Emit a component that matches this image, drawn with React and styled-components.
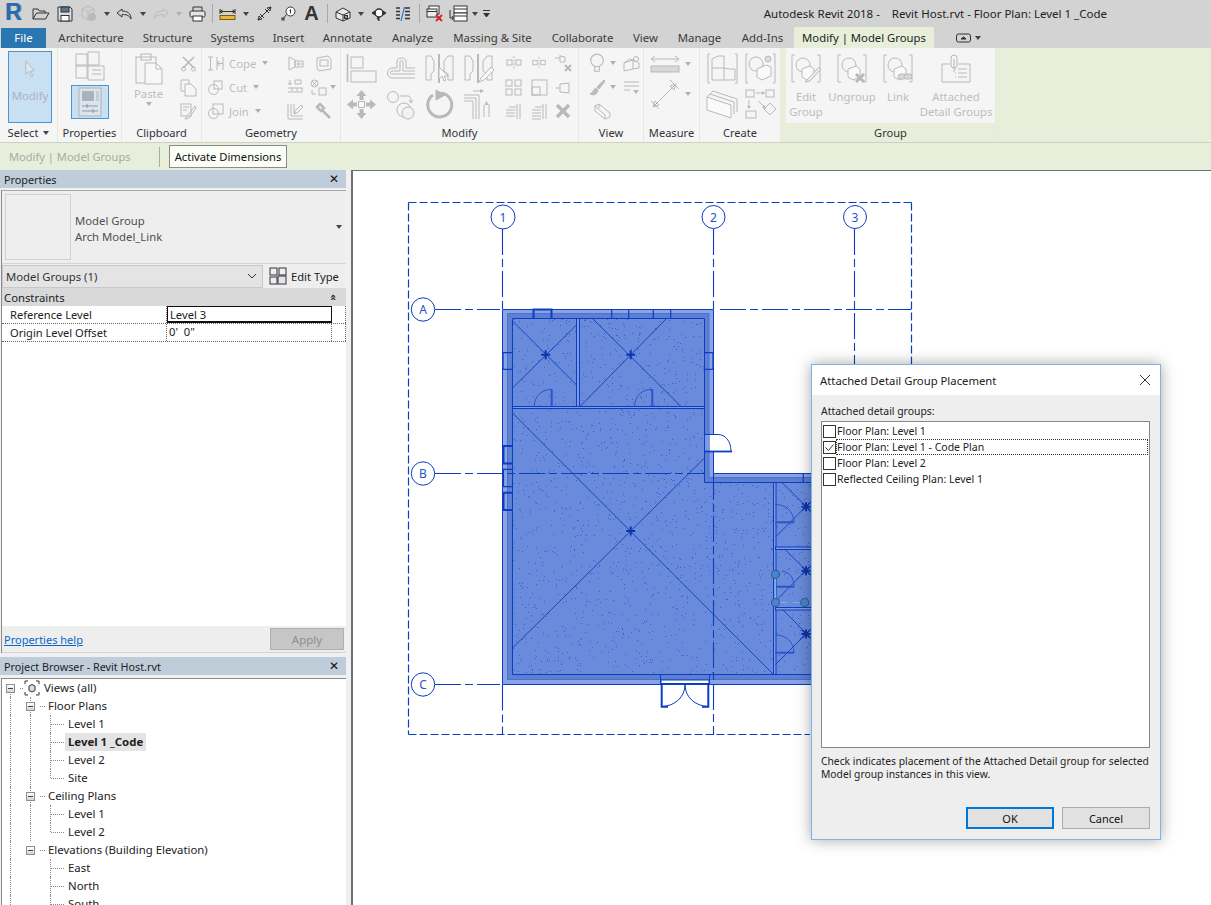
import React, { useMemo } from 'react';
import styled, { createGlobalStyle } from 'styled-components';

const FONT = `"Noto Sans", "Open Sans", sans-serif`;

const GlobalStyle = createGlobalStyle`
    html, body {
        margin:0;
        padding:0;
        background:#f0f0f0;
    }
    * {
        box-sizing:border-box;
    }
`;

function App() {
    return (
        <Page>
            <GlobalStyle />
            <TitleBar>
                <Logo>R</Logo>
                {qatItems().map((item, i) => (
                    <QatSlot key={i} $w={item.w}>{item.el}</QatSlot>
                ))}
                <WindowTitle>Autodesk Revit 2018 - &nbsp;&nbsp; Revit Host.rvt - Floor Plan: Level 1 _Code</WindowTitle>
            </TitleBar>
            <TabBar>
                <FileTab>File</FileTab>
                {tabs.map((t) => (
                    <Tab key={t[0]} $w={t[1]}>{t[0]}</Tab>
                ))}
                <ContextTab>Modify | Model Groups</ContextTab>
                <TabExtra>
                    <Glyph $s={18} viewBox="0 0 18 12" $tone="dark"><rect x="1.5" y="2" width="14" height="8" rx="2" /><path d="M6 7l2.5-2L11 7z" fill="#333" /></Glyph>
                    <Caret $dark />
                </TabExtra>
            </TabBar>
            <Ribbon />
            <OptionsBar>
                <ContextName>Modify | Model Groups</ContextName>
                <OptionsSep />
                <OptionsButton>Activate Dimensions</OptionsButton>
            </OptionsBar>
            <Workspace>
                <LeftColumn>
                    <PropertiesPanel />
                    <BrowserPanel />
                </LeftColumn>
                <Canvas>
                    <Drawing />
                    <Dialog />
                </Canvas>
            </Workspace>
        </Page>
    );
}

// ---- quick access toolbar

const Sep = () => <QatSep />;

const qatItems = () => [
    { w: 27, el: null },
    { w: 27, el: <Glyph $s={18} viewBox="0 0 18 16" $tone="dark"><path d="M1 13V3h5l1.500 2H13v2" /><path d="M1 13l3.500-6H17l-3.500 6z" /></Glyph> },
    { w: 22, el: <Glyph $s={16} viewBox="0 0 16 16" $tone="dark"><path d="M1 1h12l2 2v12H1z" fill="#d8dde2" /><rect x="4" y="1" width="8" height="5" fill="#5b7690" /><rect x="4" y="9.500" width="8" height="5.500" fill="#fff" /></Glyph> },
    { w: 25, el: <Glyph $s={17} viewBox="0 0 17 17"><path d="M8 1l6 3v7l-6 4-6-4V4z" /><path d="M2 4l6 3 6-3M8 7v8" /><circle cx="12" cy="12" r="3.500" fill="#bbb" /></Glyph> },
    { w: 11, el: <Caret $dark /> },
    { w: 25, el: <Glyph $s={17} viewBox="0 0 17 14" $tone="dark"><path d="M6 2L1 6l5 4V7.500c4 0 7 .5 9 4.500 0-6-4-8-9-8z" /></Glyph> },
    { w: 11, el: <Caret $dark /> },
    { w: 25, el: <Glyph $s={17} viewBox="0 0 17 14"><path d="M11 2l5 4-5 4V7.500c-4 0-7 .5-9 4.500 0-6 4-8 9-8z" /></Glyph> },
    { w: 11, el: <Caret /> },
    { w: 26, el: <Glyph $s={17} viewBox="0 0 17 16" $tone="dark"><path d="M4 5V1h9v4" /><rect x="1" y="5" width="15" height="6" rx="1.500" fill="#e4e4e4" /><rect x="4" y="10" width="9" height="5" fill="#fff" /></Glyph> },
    { w: 5, el: <Sep /> },
    { w: 25, el: <Glyph $s={17} viewBox="0 0 17 14" $tone="dark"><path d="M1 2v5M16 2v5M1 4.500h15M3.500 3L1 4.500 3.500 6M13.500 3L16 4.500 13.500 6" /><rect x="1" y="8.500" width="15" height="4" fill="#e8b83a" stroke="#7a5a10" /></Glyph> },
    { w: 11, el: <Caret $dark /> },
    { w: 26, el: <Glyph $s={17} viewBox="0 0 17 17" $tone="dark"><path d="M2 15L15 2M4 9l4 4M9 4l4 4M2 15l1-4 3 3zM15 2l-1 4-3-3z" /></Glyph> },
    { w: 22, el: <Glyph $s={15} viewBox="0 0 15 15" $tone="dark"><circle cx="9.500" cy="5.500" r="4.500" fill="#fff" /><path d="M9.500 3.500v4M8.500 4.500l1-1M5.500 8.500L2 13" /><rect x="1" y="12" width="2" height="2" /></Glyph> },
    { w: 25, el: <LetterTool>A</LetterTool> },
    { w: 6, el: <Sep /> },
    { w: 25, el: <Glyph $s={16} viewBox="0 0 16 16" $tone="dark"><path d="M1 6l7-4 7 4v6l-7 3-7-3z" fill="#e9e9e9" /><path d="M1 6l7 3 7-3M8 9v6" /><rect x="9.500" y="9.500" width="3" height="3" fill="#999" /></Glyph> },
    { w: 11, el: <Caret $dark /> },
    { w: 25, el: <Glyph $s={14} viewBox="0 0 14 14" $tone="dark"><circle cx="7" cy="6" r="4" fill="#fff" strokeWidth="1.500" /><path d="M0 6h3M11 6h3" /><path d="M7 10v4l-2-3z" fill="#333" /><path d="M3 4L0 6l3 2zM11 4l3 2-3 2z" fill="#333" /></Glyph> },
    { w: 24, el: <Glyph $s={16} viewBox="0 0 16 16" $tone="dark"><path d="M1 2h4M1 5.500h4M1 9h4M1 12.500h4M10 2h5M10 5.500h5M10 9h5M10 12.500h5" strokeWidth="1.500" /><path d="M9.500 1L6 15" stroke="#2a7fd4" strokeWidth="1.200" /></Glyph> },
    { w: 8, el: <Sep /> },
    { w: 23, el: <Glyph $s={17} viewBox="0 0 17 17" $tone="dark"><rect x="3" y="1" width="10" height="8" fill="#fff" /><rect x="1" y="4" width="10" height="8" fill="#eee" /><path d="M1 6.500h10" /><path d="M10 10l6 6M16 10l-6 6" stroke="#d42020" strokeWidth="1.800" /></Glyph> },
    { w: 24, el: <Glyph $s={19} viewBox="0 0 19 17" $tone="dark"><rect x="5" y="1" width="13" height="7" fill="#fff" /><rect x="5" y="8" width="13" height="8" fill="#fff" /><path d="M5 4h13M5 11h13M1 5v8h3M3 11l1.500 2L3 15" /></Glyph> },
    { w: 10, el: <Caret $dark /> },
    { w: 12, el: <CustomizeMark />, },
];

// ---- tabs

const tabs = [
    ['Architecture', 86], ['Structure', 67], ['Systems', 63], ['Insert', 49], ['Annotate', 69], ['Analyze', 61],
    ['Massing & Site', 99], ['Collaborate', 81], ['View', 45], ['Manage', 63], ['Add-Ins', 63],
];

// ---- ribbon

const Arrow = ({ d }) => <path d={d} fill="#b9b9b9" stroke="none" />;

const Ribbon = () => (
    <RibbonBar>
        <Panel $w={58}>
            <PanelBody>
                <ModifyButton>
                    <Glyph $s={15} viewBox="0 0 16 20"><path d="M3 1v14l3-3 2.500 6 2-1-2.500-5.500H12z" fill="#dce7f1" /></Glyph>
                    <ModifyText>Modify</ModifyText>
                </ModifyButton>
            </PanelBody>
            <PanelLabel>Select <Caret $dark $left={5} /></PanelLabel>
        </Panel>
        <Panel $w={64}>
            <PropsBody>
                <Glyph $s={31} viewBox="0 0 31 31"><rect x="2" y="3" width="11" height="11" /><rect x="14" y="1" width="11" height="13" /><rect x="2" y="15" width="11" height="12" /><rect x="14" y="15" width="16" height="14" fill="#f4f4f4" /><path d="M18 19h9M18 23h9" /></Glyph>
                <ActiveProps>
                    <Glyph $s={24} viewBox="0 0 24 30"><rect x="1" y="1" width="22" height="28" fill="#dce4ec" stroke="#a9b3bd" /><rect x="4" y="4" width="12" height="10" fill="#a9b3bd" stroke="none" /><rect x="18" y="4" width="3" height="10" fill="#c5cdd5" stroke="none" /><path d="M4 19h16M4 24h16M9 17v4M15 22v4" stroke="#8d97a1" /></Glyph>
                </ActiveProps>
            </PropsBody>
            <PanelLabel>Properties</PanelLabel>
        </Panel>
        <Panel $w={80}>
            <ClipboardBody>
                <PasteCol>
                    <Glyph $s={30} viewBox="0 0 30 32"><rect x="2" y="4" width="20" height="26" /><rect x="7" y="1" width="10" height="6" /><path d="M11 10h11l6 6v15H11z" fill="#f7f7f7" /><path d="M22 10v6h6" /></Glyph>
                    <ToolText>Paste</ToolText>
                    <Caret />
                </PasteCol>
                <ToolGrid $cols="26px">
                    <Cell><Glyph $s={17} viewBox="0 0 17 17"><path d="M3 2l11 11M14 2L3 13" strokeWidth="1.600" /><circle cx="3.500" cy="14" r="2" /><circle cx="13.500" cy="14" r="2" /></Glyph></Cell>
                    <Cell><Glyph $s={17} viewBox="0 0 17 17"><path d="M1 1h8v4M5 5h6l5 5v7H5zM1 1v11h4" /></Glyph></Cell>
                    <Cell><Glyph $s={17} viewBox="0 0 17 17"><rect x="1" y="1" width="10" height="12" /><path d="M3 4h6M3 7h4M15 3L7 13l-2 3 4-1 7-10z" /></Glyph></Cell>
                </ToolGrid>
            </ClipboardBody>
            <PanelLabel>Clipboard</PanelLabel>
        </Panel>
        <Panel $w={139}>
            <GeometryBody>
                <ToolGrid $cols="76px 25px 30px">
                    <Cell $start>
                        <Glyph $s={17} viewBox="0 0 17 17"><path d="M1 2h5M1 15h5M3.500 2v13M10 2v13M16 2v13M10 8.500h6M13 6l-3 2.500L13 11" /></Glyph>
                        <ToolText $gap={5}>Cope</ToolText><Caret $left={6} />
                    </Cell>
                    <Cell><Glyph $s={17} viewBox="0 0 17 17"><path d="M2 2v13l6-3V5zM8 6h8v6H8z" /><path d="M15 9H10M12 7l-2 2 2 2" /></Glyph></Cell>
                    <Cell><Glyph $s={17} viewBox="0 0 17 17"><path d="M2 3l11-2 3 3v10l-12 2-2-3z" /><rect x="5" y="5" width="8" height="6" /></Glyph></Cell>
                    <Cell $start>
                        <Glyph $s={17} viewBox="0 0 17 17"><circle cx="6.500" cy="10.500" r="5" /><rect x="7" y="2" width="8" height="8" /></Glyph>
                        <ToolText $gap={5}>Cut</ToolText><Caret $left={6} />
                    </Cell>
                    <Cell><Glyph $s={17} viewBox="0 0 17 17"><path d="M3 1v5M1 4l2 2 2-2M8 1h6v4H8zM1 9h15M5 9v3M10 9v3M15 9v3M1 13h15" /></Glyph></Cell>
                    <Cell>
                        <Glyph $s={17} viewBox="0 0 17 17"><circle cx="4.500" cy="4.500" r="3.500" /><path d="M2 2l5 5M7 2L2 7" /><rect x="9" y="9" width="7" height="7" /><path d="M2 11v4h4" /></Glyph>
                        <Caret $left={3} />
                    </Cell>
                    <Cell $start>
                        <Glyph $s={17} viewBox="0 0 17 17"><rect x="6" y="1" width="10" height="10" /><circle cx="6.500" cy="10.500" r="5" /></Glyph>
                        <ToolText $gap={5}>Join</ToolText><Caret $left={6} />
                    </Cell>
                    <Cell><Glyph $s={17} viewBox="0 0 17 17"><path d="M1 1v15h15M4 1v12h12M7 1v9h2M14 2L8 8l-1 3 3-1 6-6z" /></Glyph></Cell>
                    <Cell><Glyph $s={17} viewBox="0 0 17 17"><path d="M2 4l3-3 4 4-3 3zM7 7l8 8" strokeWidth="2.500" /></Glyph></Cell>
                </ToolGrid>
            </GeometryBody>
            <PanelLabel>Geometry</PanelLabel>
        </Panel>
        <Panel $w={238}>
            <ModifyBody>
                <LargeGrid>
                    <Glyph $s={31} viewBox="0 0 31 31"><path d="M1.500 1v28" strokeWidth="1.600" /><rect x="5" y="4" width="12" height="11" /><rect x="5" y="18" width="25" height="11" /></Glyph>
                    <Glyph $s={31} viewBox="0 0 31 31"><path d="M30 15h-9V8c0-4-9-4-9 0v7H7c-6 0-6 10 0 10h23M30 21H7c-2 0-2-3 0-3h8V9c0-2 3-2 3 0v9h12" /></Glyph>
                    <Glyph $s={31} viewBox="0 0 31 31"><path d="M2 3h5l3 5v10l-3 3v6H2z" /><path d="M15 1v29" strokeWidth="2" /><path d="M29 3h-5l-4 5v10l4 3v6h5z" fill="#f4f4f4" /><path d="M15 14v12l3-3 2 5 2-1-2-4h4z" fill="#fafafa" /></Glyph>
                    <Glyph $s={31} viewBox="0 0 31 31"><path d="M2 3h5l3 5v10l-3 3v6H2z" /><path d="M15 1v29" strokeWidth="2" /><path d="M29 3h-5l-4 5v10l4 3v6h5z" fill="#f4f4f4" /><path d="M28 14L18 25l-2 4 5-2 10-10z" fill="#fafafa" /></Glyph>
                    <Glyph $s={31} viewBox="0 0 31 31" $solid><Arrow d="M15.500 1l5 6h-3v4h-4V7h-3zM15.500 30l5-6h-3v-4h-4v4h-3zM1 15.500l6-5v3h4v4H7v3zM30 15.500l-6-5v3h-4v4h4v3z" /><rect x="12.500" y="12.500" width="6" height="6" fill="#f8f8f8" /></Glyph>
                    <Glyph $s={31} viewBox="0 0 31 31"><circle cx="8" cy="8" r="5.500" /><path d="M15 7h8c3 0 3 3 3 6M24 11l2 3 2-3" /><circle cx="19" cy="21" r="7" /><circle cx="23" cy="24" r="6" fill="#f2f2f2" /></Glyph>
                    <Glyph $s={31} viewBox="0 0 31 31"><path d="M9 6a12 12 0 1 0 8-2" fill="none" strokeWidth="3" /><path d="M12 1l9 5-9 5z" fill="#b9b9b9" /></Glyph>
                    <Glyph $s={31} viewBox="0 0 31 31"><path d="M1 6h15v24M1 9h12v21M1 12h9v18M10 2h10l-2-1M21 16v12M26 15v13" /><Arrow d="M21 2l-4-2v4zM23.500 12l-2 4h4z" /></Glyph>
                </LargeGrid>
                <ToolGrid $cols="25px 26px 22px">
                    <Cell><Glyph $s={18} viewBox="0 0 18 18"><path d="M9 2v14" strokeDasharray="2 1.500" /><rect x="2" y="6" width="5" height="5" /><rect x="11" y="6" width="5" height="5" /></Glyph></Cell>
                    <Cell><Glyph $s={16} viewBox="0 0 18 18"><path d="M9 2v14" strokeDasharray="2 1.500" /><rect x="2" y="6" width="5" height="5" /><rect x="11" y="6" width="5" height="5" /></Glyph></Cell>
                    <Cell><Glyph $s={18} viewBox="0 0 18 18"><path d="M1 4h5M6 1v7M6 2l5 1v5H6" /><path d="M11 11l6 6M17 11l-6 6" strokeWidth="2" /></Glyph></Cell>
                    <Cell><Glyph $s={17} viewBox="0 0 17 17"><rect x="1" y="1" width="6" height="6" /><rect x="10" y="1" width="6" height="6" /><rect x="1" y="10" width="6" height="6" /><rect x="10" y="10" width="6" height="6" /></Glyph></Cell>
                    <Cell><Glyph $s={17} viewBox="0 0 17 17"><rect x="1" y="1" width="15" height="15" /><rect x="1" y="8" width="8" height="8" /></Glyph></Cell>
                    <Cell><Glyph $s={17} viewBox="0 0 17 17"><path d="M1 9h4M5 5v8M5 5l9-1v10l-9-1" /></Glyph></Cell>
                    <Cell><Glyph $s={17} viewBox="0 0 17 17"><path d="M15 1v15M12 1v15M1 7h9M1 10h9M1 13h9M4 4h7" /></Glyph></Cell>
                    <Cell><Glyph $s={17} viewBox="0 0 17 17"><path d="M15 1v15M12 1v15M1 7h9M1 10h9M1 13h9M4 4h7M1 16h9" /></Glyph></Cell>
                    <Cell><Glyph $s={16} viewBox="0 0 16 16"><path d="M2 2l12 12M14 2L2 14" strokeWidth="3.500" /></Glyph></Cell>
                </ToolGrid>
            </ModifyBody>
            <PanelLabel>Modify</PanelLabel>
        </Panel>
        <Panel $w={65}>
            <GeometryBody>
                <ToolGrid $cols="37px 20px">
                    <Cell>
                        <Glyph $s={16} viewBox="0 0 14 18"><circle cx="7" cy="6.500" r="5.500" /><path d="M5 12v4h4v-4" /></Glyph>
                        <Caret $left={5} />
                    </Cell>
                    <Cell><Glyph $s={17} viewBox="0 0 17 17"><path d="M1 8l9-3v9l-9 2zM10 5l6 3v5l-6 1M1 8l6-4 3 1" /><circle cx="13" cy="4" r="2.500" /></Glyph></Cell>
                    <Cell>
                        <Glyph $s={17} viewBox="0 0 17 17"><path d="M15 1L8 8l2 2 6-8zM7 9c-3 1-2 4-6 6 4 2 8 0 8-4z" fill="#bdbdbd" /></Glyph>
                        <Caret $left={4} />
                    </Cell>
                    <Cell><Glyph $s={17} viewBox="0 0 17 17"><path d="M1 3h15M1 7h15M1 11h6" /><Arrow d="M13 15l-3-4h6z" /></Glyph></Cell>
                    <Cell><Glyph $s={17} viewBox="0 0 17 17"><path d="M1 3l10 9v4L1 8zM1 3l4-2 11 9v4l-5 2M5 1v4" /></Glyph></Cell>
                </ToolGrid>
            </GeometryBody>
            <PanelLabel>View</PanelLabel>
        </Panel>
        <Panel $w={56}>
            <MeasureBody>
                <MeasureRow>
                    <Glyph $s={30} viewBox="0 0 30 20"><path d="M1 5h28M1 5l4-3M1 5l4 3M29 5l-4-3M29 5l-4 3" /><rect x="1" y="12" width="28" height="6" fill="#d8d8d8" /></Glyph>
                    <Caret $left={5} />
                </MeasureRow>
                <MeasureRow>
                    <Glyph $s={30} viewBox="0 0 30 30"><path d="M3 28L26 5M1 22l8 8M20 1l9 9M3 28l2-6 4 4zM26 5l-6 2 4 4z" /></Glyph>
                    <Caret $left={5} />
                </MeasureRow>
            </MeasureBody>
            <PanelLabel>Measure</PanelLabel>
        </Panel>
        <Panel $w={81}>
            <CreateBody>
                <Glyph $s={31} viewBox="0 0 31 31"><path d="M3 1H1v29h2M28 1h2v29h-2M5 15V6l6-3h6v12M5 15h12v12H5zM17 27h11V16h-6l-5-1" /></Glyph>
                <Glyph $s={31} viewBox="0 0 31 31"><path d="M3 1H1v29h2M28 1h2v29h-2" /><circle cx="11" cy="11" r="7" /><path d="M12 16l9-4 5 2v9l-9 4-5-3z" fill="#fafafa" /><circle cx="23" cy="6" r="3" fill="#ddd" /></Glyph>
                <Glyph $s={33} viewBox="0 0 33 32"><path d="M1 9l24 8v13L1 22z" fill="#fafafa" /><path d="M4 6l24 8v12M7 3l24 8v13M1 9l3-3M4 6l3-3" /></Glyph>
                <Glyph $s={31} viewBox="0 0 31 31"><rect x="1" y="1" width="8" height="7" /><rect x="21" y="1" width="8" height="7" /><path d="M11 4h8M4 11v7M13 12l7 6" /><rect x="1" y="22" width="10" height="7" /><path d="M25 14l6 6-6 6-6-6z" /><Arrow d="M20 4l-3-2v4zM4 20l-2-3h4zM21 20l-4-1 2-3z" /></Glyph>
            </CreateBody>
            <PanelLabel>Create</PanelLabel>
        </Panel>
        <GroupPanel>
            <GroupBody>
                <GroupTool $w={40}>
                    <Glyph $s={30} viewBox="0 0 30 30"><path d="M4 1H1v27h3M26 1h3v27h-3" /><circle cx="12" cy="11" r="7" /><path d="M11 15l8-3 4 3v8l-7 3-5-3z" fill="#fafafa" /><path d="M28 13L17 25l-3 3 5-1 11-12z" fill="#ececec" /></Glyph>
                    <ToolText>Edit<br />Group</ToolText>
                </GroupTool>
                <GroupTool $w={52}>
                    <Glyph $s={30} viewBox="0 0 30 30"><path d="M4 1H1v27h3M26 1h3v27h-3" /><circle cx="12" cy="11" r="7" /><path d="M11 15l8-3 4 3v8l-7 3-5-3z" fill="#fafafa" /><path d="M19 20l8 8M27 20l-8 8" strokeWidth="3" /></Glyph>
                    <ToolText>Ungroup</ToolText>
                </GroupTool>
                <GroupTool $w={40}>
                    <Glyph $s={30} viewBox="0 0 30 30"><path d="M4 1H1v27h3M26 1h3v27h-3" /><circle cx="12" cy="11" r="7" /><path d="M11 15l8-3 4 3v8l-7 3-5-3z" fill="#fafafa" /><rect x="15" y="20" width="8" height="5" rx="2.500" fill="#d8d8d8" /><rect x="21" y="20" width="8" height="5" rx="2.500" fill="#d8d8d8" /></Glyph>
                    <ToolText>Link</ToolText>
                </GroupTool>
                <GroupTool $w={76}>
                    <Glyph $s={30} viewBox="0 0 30 30"><path d="M1 10h8M17 10h12v18H1V10" /><rect x="10" y="1" width="6" height="13" rx="3" /><path d="M13 5v13M17 15h9M17 19h9M17 23h9M14 15h1M14 19h1M14 23h1" /></Glyph>
                    <ToolText>Attached<br />Detail Groups</ToolText>
                </GroupTool>
            </GroupBody>
            <GroupLabel>Group</GroupLabel>
        </GroupPanel>
    </RibbonBar>
);

// ---- properties

const PropertiesPanel = () => (
    <PropsWrap>
        <PanelHeader>Properties<CloseMark>✕</CloseMark></PanelHeader>
        <PropsContent>
            <TypeBox>
                <TypePreview />
                <TypeName>Model Group<br />Arch Model_Link</TypeName>
                <Caret $dark />
            </TypeBox>
            <FilterRow>
                <FilterSelect>
                    Model Groups (1)
                    <Glyph $s={10} viewBox="0 0 10 6" $tone="dark"><path d="M1 1l4 4 4-4" /></Glyph>
                </FilterSelect>
                <EditType>
                    <Glyph $s={18} viewBox="0 0 18 18" $tone="dark"><rect x="1" y="1" width="7" height="7" /><rect x="10" y="1" width="7" height="7" /><rect x="1" y="10" width="7" height="7" /><rect x="9" y="9" width="8" height="8" fill="#dfe6ee" /></Glyph>
                    Edit Type
                </EditType>
            </FilterRow>
            <SectionHead>Constraints<Collapse>«</Collapse></SectionHead>
            <PropRow>
                <PropName>Reference Level</PropName>
                <PropValue $active>Level 3</PropValue>
                <PropTail />
            </PropRow>
            <PropRow>
                <PropName>Origin Level Offset</PropName>
                <PropValue>0'  0"</PropValue>
                <PropTail />
            </PropRow>
            <PropsBlank />
            <PropsFooter>
                <HelpLink>Properties help</HelpLink>
                <ApplyButton>Apply</ApplyButton>
            </PropsFooter>
        </PropsContent>
    </PropsWrap>
);

// ---- project browser

const treeRows = [
    { label: 'Views (all)', depth: 0 },
    { label: 'Floor Plans', depth: 1 },
    { label: 'Level 1', depth: 2, line: true },
    { label: 'Level 1 _Code', depth: 2, line: true, current: true },
    { label: 'Level 2', depth: 2, line: true },
    { label: 'Site', depth: 2, line: true, last: true },
    { label: 'Ceiling Plans', depth: 1 },
    { label: 'Level 1', depth: 2, line: true },
    { label: 'Level 2', depth: 2, line: true, last: true },
    { label: 'Elevations (Building Elevation)', depth: 1, end: true },
    { label: 'East', depth: 2 },
    { label: 'North', depth: 2 },
    { label: 'South', depth: 2 },
];

const BrowserPanel = () => (
    <BrowserWrap>
        <PanelHeader>Project Browser - Revit Host.rvt<CloseMark>✕</CloseMark></PanelHeader>
        <TreeBox>
            {treeRows.map((row, i) => (
                <TreeRow key={i}>
                    {row.depth > 0 && <Guide />}
                    {row.depth === 2 && <Guide $hidden={!row.line} />}
                    {row.depth < 2 && <ToggleSlot $end={row.end} $root={row.depth === 0}><Toggle /></ToggleSlot>}
                    {row.depth === 1 && <Dash />}
                    {row.depth === 0 && <Dash $short />}
                    {row.depth === 2 && <Elbow $last={row.last} />}
                    {row.depth === 0 && (
                        <ViewsIcon>
                            <Glyph $s={16} viewBox="0 0 16 16" $tone="dark"><path d="M1 4V1h3M12 1h3v3M15 12v3h-3M4 15H1v-3" /><path d="M5 6l3-1.500L11 6v4.500L8 12l-3-1.500z" fill="#ddd" /></Glyph>
                        </ViewsIcon>
                    )}
                    <TreeLabel $current={row.current}>{row.label}</TreeLabel>
                </TreeRow>
            ))}
        </TreeBox>
    </BrowserWrap>
);

// ---- plan drawing, coordinates are the page's own

const BLUE = '#0b3fc0';

const Star = ({ x, y, wide }) => (
    <g stroke="#0a36a8" strokeWidth="2">
        <path d={`M${x - 4.500} ${y}h9M${x} ${y - 4.500}v9`} />
        {wide && <path strokeWidth="1.200" d={`M${x - 4} ${y - 4}l8 8M${x + 4} ${y - 4}l-8 8`} />}
    </g>
);

const Bubble = ({ x, y, r, label }) => (
    <g>
        <circle cx={x} cy={y} r={r} fill="#fff" stroke={BLUE} />
        <BubbleText x={x} y={y + 4.500} textAnchor="middle">{label}</BubbleText>
    </g>
);

const Door = ({ d, leaf }) => (
    <g>
        <path d={d} fill="none" stroke="#2a55c8" />
        <path d={leaf} fill="none" stroke="#2a55c8" strokeWidth="2" />
    </g>
);

const Handle = ({ x, y }) => <circle cx={x} cy={y} r="4" fill="#3f86dc" stroke="#4a5c7c" strokeWidth="1.200" />;

function inside(x, y) {
    if (x < 513 || x > 830 || y < 319 || y > 674) return false;
    if (y < 483 && x > 704) return false;
    return true;
}

const Drawing = () => {
    const speckle = useMemo(() => {
        // small fixed generator, the dots must land in the same place every time
        let seed = 48271;
        const next = () => {
            seed = (seed * 16807) % 2147483647;
            return seed / 2147483647;
        };
        let d = '';
        for (let i = 0; i < 2000; i++) {
            const x = Math.round(512 + next() * 320);
            const y = Math.round(318 + next() * 358);
            if (inside(x, y)) d += `M${x} ${y}h1v1h-1z`;
        }
        return d;
    }, []);

    return (
        <PlanSvg viewBox="352 171 859 734">
            <path d="M502.500 309.500H713.500V473.500H830V684.500H502.500Z" fill="#8aa2e6" />
            <path d="M507.500 313.500H709V477.500H830V679.500H507.500Z" fill="#5d7fd4" stroke="#4d70cc" />
            <path d="M512.500 318.500H704.500V482.500H830V674.500H512.500Z" fill="#6a8bdb" />
            <path d={speckle} fill="#3a60d0" />

            {/* interior walls */}
            <g fill="#7f9ae2" stroke={BLUE} strokeWidth="1">
                <rect x="576.500" y="318.500" width="3" height="88" />
                <rect x="512.500" y="406.500" width="192" height="2" />
                <rect x="773.500" y="482.500" width="2.500" height="192" />
                <rect x="775.500" y="547" width="55" height="2.500" />
                <rect x="775.500" y="607.500" width="55" height="2.500" />
            </g>
            <path d="M502.500 309.500H713.500V473.500H830M830 684.500H502.500V309.500M512.500 318.500H704.500V482.500H830M830 674.500H512.500V318.500" fill="none" stroke={BLUE} />

            {/* ceiling diagonals */}
            <g stroke={BLUE} strokeWidth="0.900" fill="none">
                <path d="M512.500 321L576.500 385M576.500 325L512.500 388" />
                <path d="M592.500 318.500L681 406.500M666.500 318.500L580 406.500" />
                <path d="M512.500 413L773 674M512.500 648L704.500 458" />
                <path d="M782 482.500L830 530M775.500 537L830 482.500" />
                <path d="M785 549.500L830 594M775.500 601L830 546.500" />
                <path d="M783 610L830 657M775.500 664.500L830 610" />
            </g>
            <Star x={545.700} y={354.700} />
            <Star x={630.700} y={354.700} />
            <Star x={630.700} y={531} />
            <Star x={806} y={506.700} wide />
            <Star x={806} y={570.700} wide />
            <Star x={806} y={634} wide />

            {/* windows */}
            <g fill="none" stroke={BLUE} strokeWidth="1.200">
                <path d="M533.500 318V309.500H551.500V318" strokeWidth="2" />
                <path d="M611.700 318V309.500H628.700V318M653.300 318V309.500H670.700V318" />
                <path d="M512 352.700H503V369.300H512M704.500 352.700H713V369.300H704.500" />
                <path d="M512 446H503.500V463.500H512" strokeWidth="2" />
                <path d="M512 469.300H503.500V486.700H512" />
                <path d="M512 492.700H503.500V510H512" strokeWidth="2" />
                <path d="M803.300 482V473.500H830" />
            </g>

            {/* doors */}
            <Door d="M534.300 406.500C534.300 396 542 389.300 551.700 389.300" leaf="M551.700 389.300V406.500" />
            <Door d="M634.700 406.500C634.700 396 642 389.300 652.300 389.300" leaf="M652.300 389.300V406.500" />
            <Door d="M775.500 504.500C786 504.500 794 512 794 522.300" leaf="M775.500 522.300H794" />
            <Door d="M782 571C789 572 794 577 794 586.700" leaf="M775.500 586.700H794" />
            <Door d="M775.500 635C786 635 794 642 794 652.700" leaf="M775.500 652.700H794" />
            <path d="M704.500 434.500h5v17h-5z" fill="#7f9ae2" stroke={BLUE} />
            <path d="M709.500 434.500h4.500v17h-4.500z" fill="#fff" stroke="none" />
            <path d="M704.500 434.500H718C725 434.500 731 441 731 451" fill="none" stroke={BLUE} />
            <path d="M704.500 451.500H732" fill="none" stroke={BLUE} strokeWidth="1.800" />
            <path d="M660.500 674V684.500M709.500 674V684.500" stroke={BLUE} />
            <rect x="661" y="680" width="48" height="3.500" fill="#fff" stroke={BLUE} />
            <path d="M661.700 684.500V706.700H668M708.300 684.500V706.700H702" fill="none" stroke={BLUE} strokeWidth="2" />
            <path d="M662 706.500C675 706 685 697 685 684.500C685 697 695 706 708 706.500" fill="none" stroke={BLUE} />

            {/* handles */}
            <path d="M775.500 578V598M780 602.500H787M793 602.500H800" stroke="#6fb7e8" />
            <Handle x={775.500} y={574.300} />
            <Handle x={775.500} y={602.500} />
            <Handle x={804.700} y={602.500} />

            {/* crop region and grids */}
            <path d="M408.500 202.500H911.500M408.500 202.500V734.500M408.500 734.500H810" fill="none" stroke={BLUE} strokeWidth="1.200" strokeDasharray="8 3" />
            <path d="M911.500 202.500V364" fill="none" stroke={BLUE} strokeWidth="1.200" strokeDasharray="8 3" />
            <g fill="none" stroke={BLUE} strokeDasharray="26 4 8 4" strokeWidth="1.100">
                <path d="M502.500 229V309M502.500 684.500V735" />
                <path d="M713.500 229V309M713.500 474V735" />
                <path d="M854.500 229V364" />
                <path d="M435 309.500H500M720 309.500H911" />
                <path d="M435 473.500H704" />
                <path d="M435 684.500H500" />
            </g>
            <Bubble x={503} y={217} r={12} label="1" />
            <Bubble x={713.500} y={217} r={11.500} label="2" />
            <Bubble x={855} y={217} r={11.500} label="3" />
            <Bubble x={423} y={309.500} r={11.700} label="A" />
            <Bubble x={423} y={473.500} r={11.700} label="B" />
            <Bubble x={423} y={684.500} r={11.700} label="C" />
        </PlanSvg>
    );
};

// ---- dialog

const detailGroups = [
    { label: 'Floor Plan: Level 1' },
    { label: 'Floor Plan: Level 1 - Code Plan', checked: true },
    { label: 'Floor Plan: Level 2' },
    { label: 'Reflected Ceiling Plan: Level 1' },
];

const Dialog = () => (
    <DialogWindow>
        <DialogTitle>
            Attached Detail Group Placement
            <Glyph $s={12} viewBox="0 0 12 12" $tone="dark"><path d="M1 1l10 10M11 1L1 11" /></Glyph>
        </DialogTitle>
        <DialogBody>
            <DialogLabel>Attached detail groups:</DialogLabel>
            <CheckList>
                {detailGroups.map((g) => (
                    <CheckRow key={g.label}>
                        <CheckBox>
                            {g.checked && <Glyph $s={11} viewBox="0 0 11 11" $tone="dark"><path d="M1.500 5.500l3 3 5-6" /></Glyph>}
                        </CheckBox>
                        <CheckText $focus={g.checked}>{g.label}</CheckText>
                    </CheckRow>
                ))}
            </CheckList>
            <DialogNote>
                Check indicates placement of the Attached Detail group for selected<br />
                Model group instances in this view.
            </DialogNote>
            <DialogButtons>
                <DialogButton $primary>OK</DialogButton>
                <DialogButton>Cancel</DialogButton>
            </DialogButtons>
        </DialogBody>
    </DialogWindow>
);

// ---- styles

const Page = styled.div`
    width:1211px;
    height:905px;
    overflow:hidden;
    display:flex;
    flex-direction:column;
    font-family:${FONT};
    font-size:11.5px;
    color:#222;
    background:#f0f0f0;
`;
const TitleBar = styled.div`
    position:relative;
    height:27px;
    flex:none;
    display:flex;
    align-items:center;
    background:#d3d3d3;
`;
const Logo = styled.span`
    position:absolute;
    left:5px;
    top:0;
    font-family:"Liberation Sans", sans-serif;
    font-weight:bold;
    font-size:23px;
    line-height:25px;
    color:#2b6ca8;
    text-shadow:1px 0 0 #5a9ac8;
`;
const QatSlot = styled.div`
    width:${(p) => p.$w}px;
    flex:none;
    display:flex;
    align-items:center;
    justify-content:center;
`;
const QatSep = styled.div`
    width:1px;
    height:19px;
    background:#a8a8a8;
`;
const LetterTool = styled.span`
    font-family:"Liberation Sans", sans-serif;
    font-weight:bold;
    font-size:20px;
    color:#333;
`;
const CustomizeMark = styled.div`
    width:7px;
    height:8px;
    border-top:1px solid #333;
    &::after {
        content:"";
        display:block;
        margin-top:2px;
        border-left:3.5px solid transparent;
        border-right:3.5px solid transparent;
        border-top:4px solid #333;
    }
`;
const WindowTitle = styled.div`
    margin-left:auto;
    padding-right:104px;
    font-size:11.5px;
    white-space:nowrap;
    color:#222;
`;
const TabBar = styled.div`
    height:21px;
    flex:none;
    display:flex;
    align-items:flex-end;
    background:#d3d3d3;
    padding-left:1px;
`;
const FileTab = styled.div`
    width:45px;
    height:20px;
    margin-right:2px;
    background:#2a76b0;
    color:#fff;
    text-align:center;
    line-height:19px;
    font-size:11.5px;
`;
const Tab = styled.div`
    width:${(p) => p.$w}px;
    flex:none;
    height:20px;
    text-align:center;
    line-height:20px;
    font-size:11.4px;
    color:#3a3a3a;
    white-space:nowrap;
`;
const ContextTab = styled.div`
    width:140px;
    flex:none;
    height:21px;
    background:#e7efda;
    text-align:center;
    line-height:21px;
    font-size:11.3px;
    white-space:nowrap;
`;
const TabExtra = styled.div`
    margin-left:21px;
    height:20px;
    display:flex;
    align-items:center;
    gap:2px;
`;
const RibbonBar = styled.div`
    height:95px;
    flex:none;
    display:flex;
    background:#e7efda;
    border-bottom:1px solid #ccd3c4;
`;
const Panel = styled.div`
    width:${(p) => p.$w}px;
    flex:none;
    display:flex;
    flex-direction:column;
    background:#f5f5f5;
    border-right:1px solid #e4edd7;
`;
const PanelBody = styled.div`
    height:75px;
    padding:3px 0 0 8px;
`;
const PanelLabel = styled.div`
    flex:1;
    display:flex;
    align-items:center;
    justify-content:center;
    font-size:11.1px;
    color:#333;
`;
const ModifyButton = styled.div`
    width:44px;
    height:72px;
    background:#c9dff2;
    border:1px solid #4d94d4;
    display:flex;
    flex-direction:column;
    align-items:center;
    padding-top:8px;
    gap:9px;
`;
const ModifyText = styled.span`
    color:#a9b4be;
    font-size:11.3px;
`;
const PropsBody = styled.div`
    height:75px;
    display:flex;
    flex-direction:column;
    align-items:center;
    padding-top:3px;
    gap:3px;
`;
const ActiveProps = styled.div`
    width:38px;
    height:34px;
    background:#c9dff2;
    border:1px solid #4d94d4;
    display:flex;
    align-items:center;
    justify-content:center;
`;
const ClipboardBody = styled.div`
    height:75px;
    display:flex;
    padding-top:3px;
`;
const PasteCol = styled.div`
    width:53px;
    display:flex;
    flex-direction:column;
    align-items:center;
    gap:1px;
    padding-top:2px;
`;
const ToolText = styled.span`
    color:#bdbdbd;
    font-size:11.3px;
    line-height:15px;
    text-align:center;
    margin-left:${(p) => p.$gap || 0}px;
`;
const ToolGrid = styled.div`
    display:grid;
    grid-template-columns:${(p) => p.$cols};
    grid-auto-rows:24px;
`;
const Cell = styled.div`
    display:flex;
    align-items:center;
    justify-content:${(p) => (p.$start ? 'flex-start' : 'center')};
`;
const GeometryBody = styled.div`
    height:75px;
    padding:3px 0 0 5px;
`;
const ModifyBody = styled.div`
    height:75px;
    display:flex;
    padding:3px 0 0 5px;
    gap:7px;
`;
const LargeGrid = styled.div`
    display:grid;
    grid-template-columns:repeat(4, 31px);
    column-gap:8px;
    row-gap:5px;
    align-content:start;
    align-items:center;
    justify-items:center;
    padding-top:2px;
`;
const MeasureBody = styled.div`
    height:75px;
    display:flex;
    flex-direction:column;
    align-items:flex-start;
    padding:6px 0 0 6px;
    gap:5px;
`;
const MeasureRow = styled.div`
    display:flex;
    align-items:center;
`;
const CreateBody = styled.div`
    height:75px;
    display:grid;
    grid-template-columns:38px 38px;
    justify-items:center;
    align-items:center;
    align-content:start;
    padding:5px 0 0 3px;
    row-gap:4px;
`;
const GroupPanel = styled.div`
    width:210px;
    flex:none;
    margin-left:5px;
    display:flex;
    flex-direction:column;
    border-right:1px solid #e4edd7;
`;
const GroupBody = styled.div`
    height:75px;
    background:#f5f5f5;
    display:flex;
    padding:6px 0 0 0;
`;
const GroupTool = styled.div`
    width:${(p) => p.$w}px;
    flex:none;
    display:flex;
    flex-direction:column;
    align-items:center;
    gap:5px;
    white-space:nowrap;
`;
const GroupLabel = styled.div`
    flex:1;
    display:flex;
    align-items:center;
    justify-content:center;
    font-size:11.1px;
    color:#333;
`;
const OptionsBar = styled.div`
    height:27px;
    flex:none;
    display:flex;
    align-items:center;
    background:#e7efda;
    padding-left:9px;
`;
const ContextName = styled.span`
    width:150px;
    color:#a8aca3;
    font-size:11.1px;
`;
const OptionsSep = styled.div`
    width:1px;
    height:20px;
    background:#a8ada1;
`;
const OptionsButton = styled.div`
    margin-left:9px;
    width:118px;
    height:23px;
    display:flex;
    align-items:center;
    justify-content:center;
    background:#fbfdf7;
    border:1px solid #8b8b8b;
    font-size:11.2px;
    color:#111;
    white-space:nowrap;
`;
const Workspace = styled.div`
    flex:1;
    min-height:0;
    display:flex;
`;
const LeftColumn = styled.div`
    width:346px;
    flex:none;
    display:flex;
    flex-direction:column;
`;
const PropsWrap = styled.div`
    height:483px;
    flex:none;
    display:flex;
    flex-direction:column;
`;
const PanelHeader = styled.div`
    height:18px;
    flex:none;
    display:flex;
    align-items:center;
    justify-content:space-between;
    padding:0 7px 0 4px;
    background:#bfcddb;
    font-size:10.8px;
    color:#222;
`;
const CloseMark = styled.span`
    font-family:"DejaVu Sans", sans-serif;
    font-weight:bold;
    font-size:12px;
    color:#111;
`;
const PropsContent = styled.div`
    flex:1;
    display:flex;
    flex-direction:column;
    margin-top:2px;
    margin-left:1px;
    border-left:1px solid #8a8a8a;
    border-top:1px solid #a8a8a8;
    background:#eee;
`;
const TypeBox = styled.div`
    height:73px;
    flex:none;
    display:flex;
    align-items:center;
    padding:0 4px 0 3px;
    border-bottom:1px solid #d4d4d4;
`;
const TypePreview = styled.div`
    width:66px;
    height:66px;
    border:1px solid #d0d0d0;
    flex:none;
`;
const TypeName = styled.div`
    flex:1;
    padding:3px 0 0 4px;
    line-height:16px;
    color:#50504f;
    font-size:11.3px;
`;
const FilterRow = styled.div`
    height:24px;
    flex:none;
    display:flex;
    align-items:center;
`;
const FilterSelect = styled.div`
    width:261px;
    height:23px;
    flex:none;
    display:flex;
    align-items:center;
    justify-content:space-between;
    padding:0 5px 0 3px;
    background:#e4e4e4;
    border:1px solid #c8c8c8;
    color:#333;
    font-size:11.3px;
`;
const EditType = styled.div`
    display:flex;
    align-items:center;
    gap:4px;
    padding-left:6px;
    font-size:11.2px;
`;
const SectionHead = styled.div`
    height:18px;
    flex:none;
    display:flex;
    align-items:center;
    justify-content:space-between;
    padding:0 9px 0 2px;
    background:#d9d9d9;
    font-size:11.3px;
`;
const Collapse = styled.span`
    transform:rotate(90deg);
    font-family:"DejaVu Sans", sans-serif;
    font-size:11px;
    font-weight:bold;
`;
const PropRow = styled.div`
    height:18px;
    flex:none;
    display:flex;
    background:#fff;
    border-bottom:1px dotted #666;
`;
const PropName = styled.div`
    width:165px;
    flex:none;
    padding-left:8px;
    line-height:17px;
    border-right:1px dotted #666;
    font-size:11.1px;
`;
const PropValue = styled.div`
    width:165px;
    flex:none;
    padding-left:2px;
    line-height:16px;
    font-size:11.2px;
    white-space:pre;
    border:${(p) => (p.$active ? '1px solid #111' : 'none')};
    border-right:${(p) => (p.$active ? '1px solid #111' : '1px dotted #666')};
    border-bottom-width:${(p) => (p.$active ? '2px' : '0')};
`;
const PropTail = styled.div`
    flex:1;
    border-right:1px dotted #666;
`;
const PropsBlank = styled.div`
    flex:1;
    background:#fff;
`;
const PropsFooter = styled.div`
    height:27px;
    flex:none;
    display:flex;
    align-items:center;
    justify-content:space-between;
    padding:0 2px 0 2px;
    border-bottom:1px solid #d4d4d4;
`;
const HelpLink = styled.a`
    color:#0a66c8;
    text-decoration:underline;
    font-size:11px;
`;
const ApplyButton = styled.div`
    width:74px;
    height:22px;
    display:flex;
    align-items:center;
    justify-content:center;
    background:#c6c6c6;
    border:1px solid #b0b0b0;
    color:#8e8e8e;
    font-size:11.5px;
`;
const BrowserWrap = styled.div`
    flex:1;
    min-height:0;
    margin-top:4px;
    display:flex;
    flex-direction:column;
`;
const TreeBox = styled.div`
    flex:1;
    margin-top:3px;
    margin-left:1px;
    border-left:1px solid #8a8a8a;
    border-top:1px solid #8a8a8a;
    background:#fff;
    padding-top:0;
    overflow:hidden;
`;
const TreeRow = styled.div`
    height:18px;
    display:flex;
    align-items:stretch;
    margin-left:-2px;
`;
const Guide = styled.div`
    width:20px;
    flex:none;
    position:relative;
    &::before {
        content:"";
        display:${(p) => (p.$hidden ? 'none' : 'block')};
        position:absolute;
        left:10px;
        top:0;
        bottom:0;
        border-left:1px dotted #8a8a8a;
    }
`;
const ToggleSlot = styled.div`
    width:20px;
    flex:none;
    position:relative;
    display:flex;
    align-items:center;
    justify-content:center;
    &::before {
        content:"";
        display:${(p) => (p.$end ? 'none' : 'block')};
        position:absolute;
        left:10px;
        top:${(p) => (p.$root ? '9px' : '0')};
        bottom:0;
        border-left:1px dotted #8a8a8a;
    }
`;
const Toggle = styled.div`
    position:relative;
    z-index:1;
    width:9px;
    height:9px;
    background:linear-gradient(#fff, #d4d4d4);
    border:1px solid #8e8e8e;
    &::after {
        content:"";
        position:absolute;
        left:1px;
        right:1px;
        top:3px;
        height:1px;
        background:#444;
    }
`;
const Dash = styled.div`
    width:${(p) => (p.$short ? 3 : 5)}px;
    flex:none;
    margin-top:9px;
    height:0;
    border-top:1px dotted #8a8a8a;
`;
const Elbow = styled.div`
    width:25px;
    flex:none;
    position:relative;
    &::before {
        content:"";
        position:absolute;
        left:10px;
        top:0;
        bottom:${(p) => (p.$last ? '9px' : '0')};
        border-left:1px dotted #8a8a8a;
    }
    &::after {
        content:"";
        position:absolute;
        left:11px;
        right:1px;
        top:9px;
        border-top:1px dotted #8a8a8a;
    }
`;
const ViewsIcon = styled.div`
    width:18px;
    flex:none;
    display:flex;
    align-items:center;
    justify-content:center;
`;
const TreeLabel = styled.div`
    padding:0 3px;
    line-height:18px;
    font-size:11.4px;
    white-space:nowrap;
    color:#222;
    font-weight:${(p) => (p.$current ? 'bold' : 'normal')};
    background:${(p) => (p.$current ? '#e4e4e4' : 'transparent')};
`;
const Canvas = styled.div`
    position:relative;
    flex:1;
    margin-left:5px;
    background:#fff;
    border-left:2px solid #707070;
    border-top:1px solid #707070;
    min-width:0;
`;
const PlanSvg = styled.svg`
    display:block;
    width:859px;
    height:734px;
    margin-left:-1px;
`;
const BubbleText = styled.text`
    font-family:${FONT};
    font-size:12px;
    fill:#2855c8;
`;
const DialogWindow = styled.div`
    position:absolute;
    left:458px;
    top:193px;
    width:350px;
    height:476px;
    display:flex;
    flex-direction:column;
    background:#fff;
    border:1px solid #7ab4ea;
    box-shadow:0 0 14px rgba(0,0,0,0.35);
`;
const DialogTitle = styled.div`
    height:30px;
    flex:none;
    display:flex;
    align-items:center;
    justify-content:space-between;
    padding:0 9px 0 8px;
    font-size:11.3px;
    color:#222;
`;
const DialogBody = styled.div`
    flex:1;
    display:flex;
    flex-direction:column;
    background:#eee;
    padding:9px 10px 10px 9px;
`;
const DialogLabel = styled.div`
    font-size:10.4px;
    line-height:15px;
    margin-bottom:2px;
`;
const CheckList = styled.div`
    height:327px;
    flex:none;
    background:#fff;
    border:1px solid #828790;
    padding:1px 1px 0 1px;
`;
const CheckRow = styled.div`
    height:16px;
    display:flex;
    align-items:center;
`;
const CheckBox = styled.div`
    width:13px;
    height:13px;
    flex:none;
    background:#fff;
    border:1px solid #333;
    display:flex;
    align-items:center;
    justify-content:center;
`;
const CheckText = styled.div`
    flex:1;
    height:16px;
    line-height:14px;
    font-size:10.5px;
    white-space:nowrap;
    border:1px dotted ${(p) => (p.$focus ? '#333' : 'transparent')};
`;
const DialogNote = styled.div`
    margin-top:7px;
    font-size:10.3px;
    line-height:13px;
    white-space:nowrap;
`;
const DialogButtons = styled.div`
    margin-top:auto;
    display:flex;
    justify-content:flex-end;
    gap:8px;
`;
const DialogButton = styled.div`
    width:88px;
    height:22px;
    display:flex;
    align-items:center;
    justify-content:center;
    background:#e1e1e1;
    border:${(p) => (p.$primary ? '2px solid #0078d7' : '1px solid #adadad')};
    font-size:11px;
    color:#111;
`;
const Glyph = styled.svg`
    display:block;
    flex:none;
    width:${(p) => p.$s}px;
    height:auto;
    overflow:visible;
    fill:${(p) => (p.$solid ? '#b9b9b9' : 'none')};
    stroke:${(p) => (p.$tone === 'dark' ? '#333' : '#b9b9b9')};
    stroke-width:1;
`;
const Caret = styled.span`
    display:inline-block;
    flex:none;
    margin-left:${(p) => p.$left || 0}px;
    width:0;
    height:0;
    border-left:3.5px solid transparent;
    border-right:3.5px solid transparent;
    border-top:4px solid ${(p) => (p.$dark ? '#444' : '#b0b0b0')};
`;

export default App;
